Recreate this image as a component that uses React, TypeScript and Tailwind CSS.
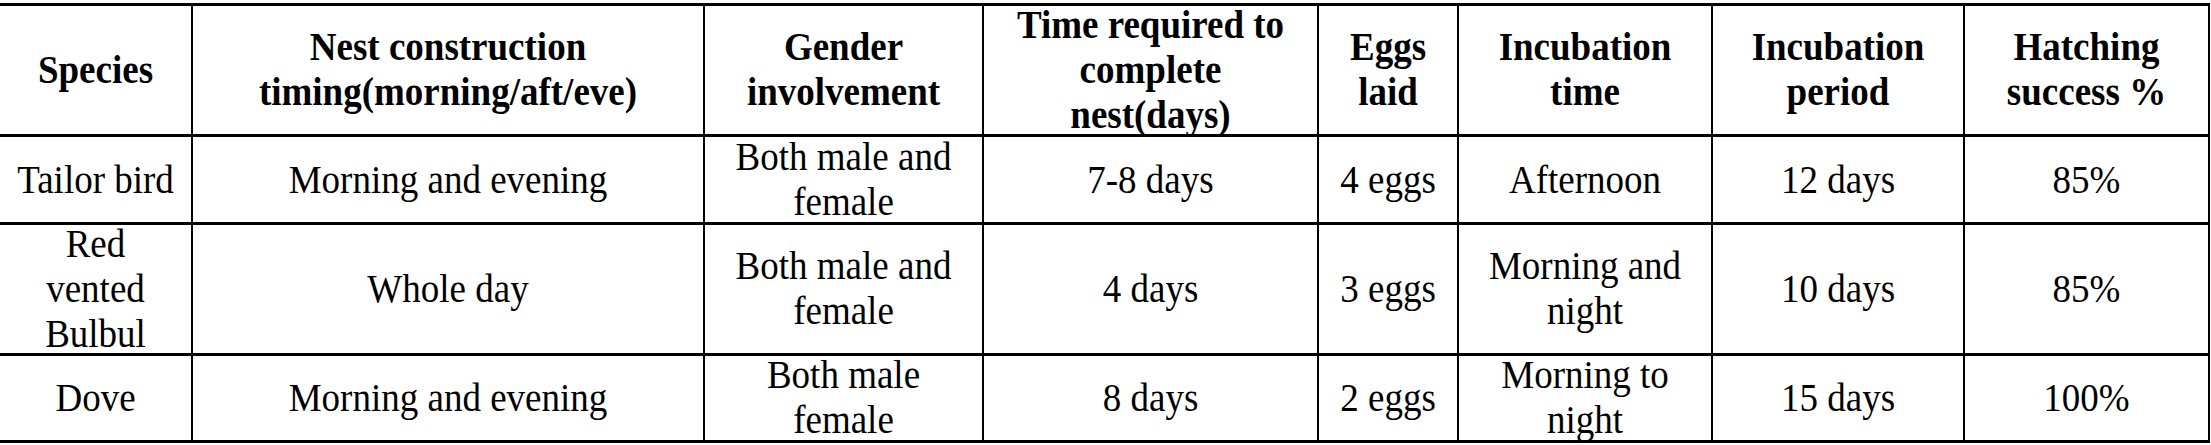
const header = [
  'Species',
  'Nest construction timing(morning/aft/eve)',
  'Gender involvement',
  'Time required to complete nest(days)',
  'Eggs laid',
  'Incubation time',
  'Incubation period',
  'Hatching success %',
]

const rows = [
  ['Tailor bird', 'Morning and evening', 'Both male and female', '7-8 days', '4 eggs', 'Afternoon', '12 days', '85%'],
  ['Red vented Bulbul', 'Whole day', 'Both male and female', '4 days', '3 eggs', 'Morning and night', '10 days', '85%'],
  ['Dove', 'Morning and evening', 'Both male female', '8 days', '2 eggs', 'Morning to night', '15 days', '100%'],
]

const widths = ['w-[192px]', 'w-[512px]', 'w-[279px]', 'w-[335px]', 'w-[140px]', 'w-[254px]', 'w-[252px]', 'w-[245px]']
const rowHeights = ['h-[88px]', 'h-[131px]', 'h-[85px]']

export default function App() {
  return (
    <div className="w-[2211px] h-[445px] bg-white pt-[3px] text-black font-['Liberation_Serif',serif]">
      <table className="table-fixed border-collapse w-[2209px]">
        <colgroup>
          {widths.map((w, i) => (
            <col key={i} className={w} />
          ))}
        </colgroup>
        <thead>
          <tr className="h-[131px]">
            {header.map((h, i) => (
              <th
                key={i}
                className={`border-y-[3px] border-x-2 border-black px-[14px] text-center align-middle font-bold text-[37px] leading-[42px] ${i === 0 ? 'border-l-0' : ''}`}
              >
                <span className="inline-block scale-y-[1.07]">{h}</span>
              </th>
            ))}
          </tr>
        </thead>
        <tbody>
          {rows.map((r, ri) => (
            <tr key={ri} className={rowHeights[ri]}>
              {r.map((c, ci) => (
                <td
                  key={ci}
                  className={`border-y-[3px] border-x-2 border-black px-[14px] text-center align-middle text-[37px] leading-[42px] ${ci === 0 ? 'border-l-0' : ''}`}
                >
                  <span className="inline-block scale-y-[1.07]">{c}</span>
                </td>
              ))}
            </tr>
          ))}
        </tbody>
      </table>
    </div>
  )
}
